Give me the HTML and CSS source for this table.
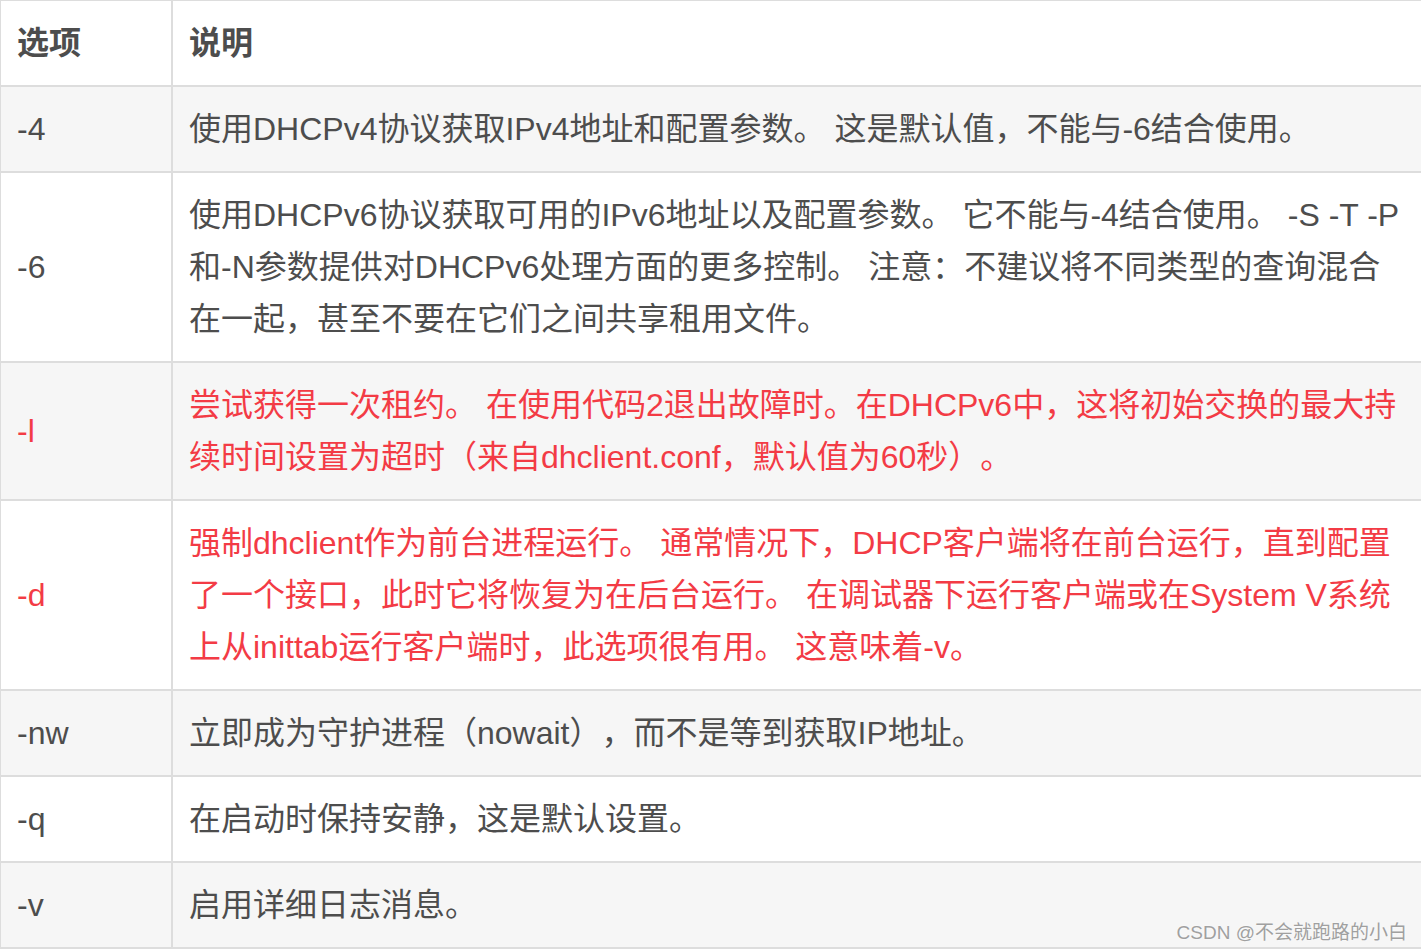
FILE: index.html
```html
<!DOCTYPE html>
<html lang="zh-CN">
<head>
<meta charset="utf-8">
<title>dhclient 选项</title>
<link rel="stylesheet" href="styles.css">
</head>
<body>
<div class="page">
<table class="opts">
  <thead>
    <tr><th class="c1">选项</th><th class="c2">说明</th></tr>
  </thead>
  <tbody>
    <tr class="odd"><td>-4</td><td>使用DHCPv4协议获取IPv4地址和配置参数。 这是默认值，不能与-6结合使用。</td></tr>
    <tr><td>-6</td><td>使用DHCPv6协议获取可用的IPv6地址以及配置参数。 它不能与-4结合使用。 -S -T -P和-N参数提供对DHCPv6处理方面的更多控制。 注意：不建议将不同类型的查询混合在一起，甚至不要在它们之间共享租用文件。</td></tr>
    <tr class="odd red"><td>-l</td><td>尝试获得一次租约。 在使用代码2退出故障时。在DHCPv6中，这将初始交换的最大持续时间设置为超时（来自dhclient.conf，默认值为60秒）。</td></tr>
    <tr class="red"><td>-d</td><td>强制dhclient作为前台进程运行。 通常情况下，DHCP客户端将在前台运行，直到配置了一个接口，此时它将恢复为在后台运行。 在调试器下运行客户端或在System V系统上从inittab运行客户端时，此选项很有用。 这意味着-v。</td></tr>
    <tr class="odd"><td>-nw</td><td>立即成为守护进程（nowait），而不是等到获取IP地址。</td></tr>
    <tr><td>-q</td><td>在启动时保持安静，这是默认设置。</td></tr>
    <tr class="odd"><td>-v</td><td>启用详细日志消息。</td></tr>
  </tbody>
</table>
<div class="mark">CSDN @不会就跑路的小白</div>
</div>
</body>
</html>
```
FILE: styles.css
```css
html, body {
  margin: 0;
  padding: 0;
  background: #ffffff;
  overflow: hidden;
}
.page {
  position: relative;
  width: 1421px;
  height: 951px;
  overflow: hidden;
}
.opts {
  border-collapse: collapse;
  width: 1426px;
  margin: -1px 0 0 -1px;
  table-layout: fixed;
  font-family: "Liberation Sans", "Noto Sans CJK SC", sans-serif;
  font-size: 32px;
  line-height: 52px;
  color: #4d4d4d;
  text-spacing-trim: space-all;
}
.opts th, .opts td {
  border: 2px solid #dddddd;
  padding: 16px 14px 16px 16px;
  text-align: left;
  vertical-align: middle;
}
.opts th {
  font-weight: bold;
}
.opts .c1 { width: 140px; }
.opts td + td, .opts th + th { padding-left: 16px; padding-right: 20px; }
.opts tr.odd td { background: #f6f6f6; }
.opts tr.red td { color: #f33b45; }
.mark {
  position: absolute;
  right: 14px;
  bottom: 5px;
  font-family: "Liberation Sans", "Noto Sans CJK SC", sans-serif;
  font-size: 19px;
  line-height: 26px;
  color: #a0a0a0;
  text-shadow: 0 0 2px #ffffff;
}
```
